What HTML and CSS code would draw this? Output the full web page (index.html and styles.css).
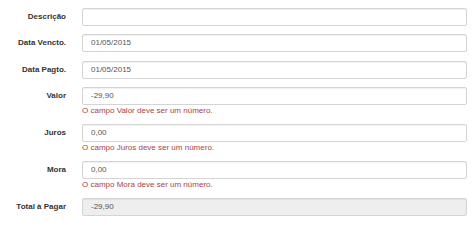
FILE: index.html
```html
<!DOCTYPE html>
<html lang="pt">
<head>
<meta charset="utf-8">
<link rel="stylesheet" href="styles.css">
</head>
<body>
<form class="form">
  <div class="row">
    <label class="label">Descrição</label>
    <div class="field"><div class="input"></div></div>
  </div>
  <div class="row">
    <label class="label">Data Vencto.</label>
    <div class="field"><div class="input">01/05/2015</div></div>
  </div>
  <div class="row">
    <label class="label">Data Pagto.</label>
    <div class="field"><div class="input">01/05/2015</div></div>
  </div>
  <div class="row has-error">
    <label class="label">Valor</label>
    <div class="field"><div class="input">-29,90</div><div class="error">O campo Valor deve ser um número.</div></div>
  </div>
  <div class="row has-error">
    <label class="label">Juros</label>
    <div class="field"><div class="input">0,00</div><div class="error">O campo Juros deve ser um número.</div></div>
  </div>
  <div class="row has-error">
    <label class="label">Mora</label>
    <div class="field"><div class="input">0,00</div><div class="error">O campo Mora deve ser um número.</div></div>
  </div>
  <div class="row">
    <label class="label">Total à Pagar</label>
    <div class="field"><div class="input disabled">-29,90</div></div>
  </div>
</form>
</body>
</html>
```
FILE: styles.css
```css
html, body {
  margin: 0;
  padding: 0;
  background: #fff;
}
body {
  font-family: "Liberation Sans", Arial, sans-serif;
  font-size: 8px;
  color: #333;
}
.form {
  display: flex;
  flex-direction: column;
  gap: 8.3px;
  padding: 8px 7px 0 0;
}
.row {
  display: grid;
  grid-template-columns: 66px 1fr;
  column-gap: 16px;
  align-items: start;
}
.label {
  font-weight: bold;
  text-align: right;
  line-height: 18px;
  color: #333;
}
.input {
  box-sizing: border-box;
  height: 18px;
  line-height: 16px;
  padding: 0 8px;
  border: 1px solid #d4d4d4;
  border-radius: 2px;
  box-shadow: inset 0 1px 1px rgba(0,0,0,0.06);
  color: #555;
  background: #fff;
}
.input.disabled {
  background: #eee;
}
.error {
  color: #a94442;
  line-height: 9px;
  margin-top: 1px;
  margin-bottom: 0.8px;
}
```
